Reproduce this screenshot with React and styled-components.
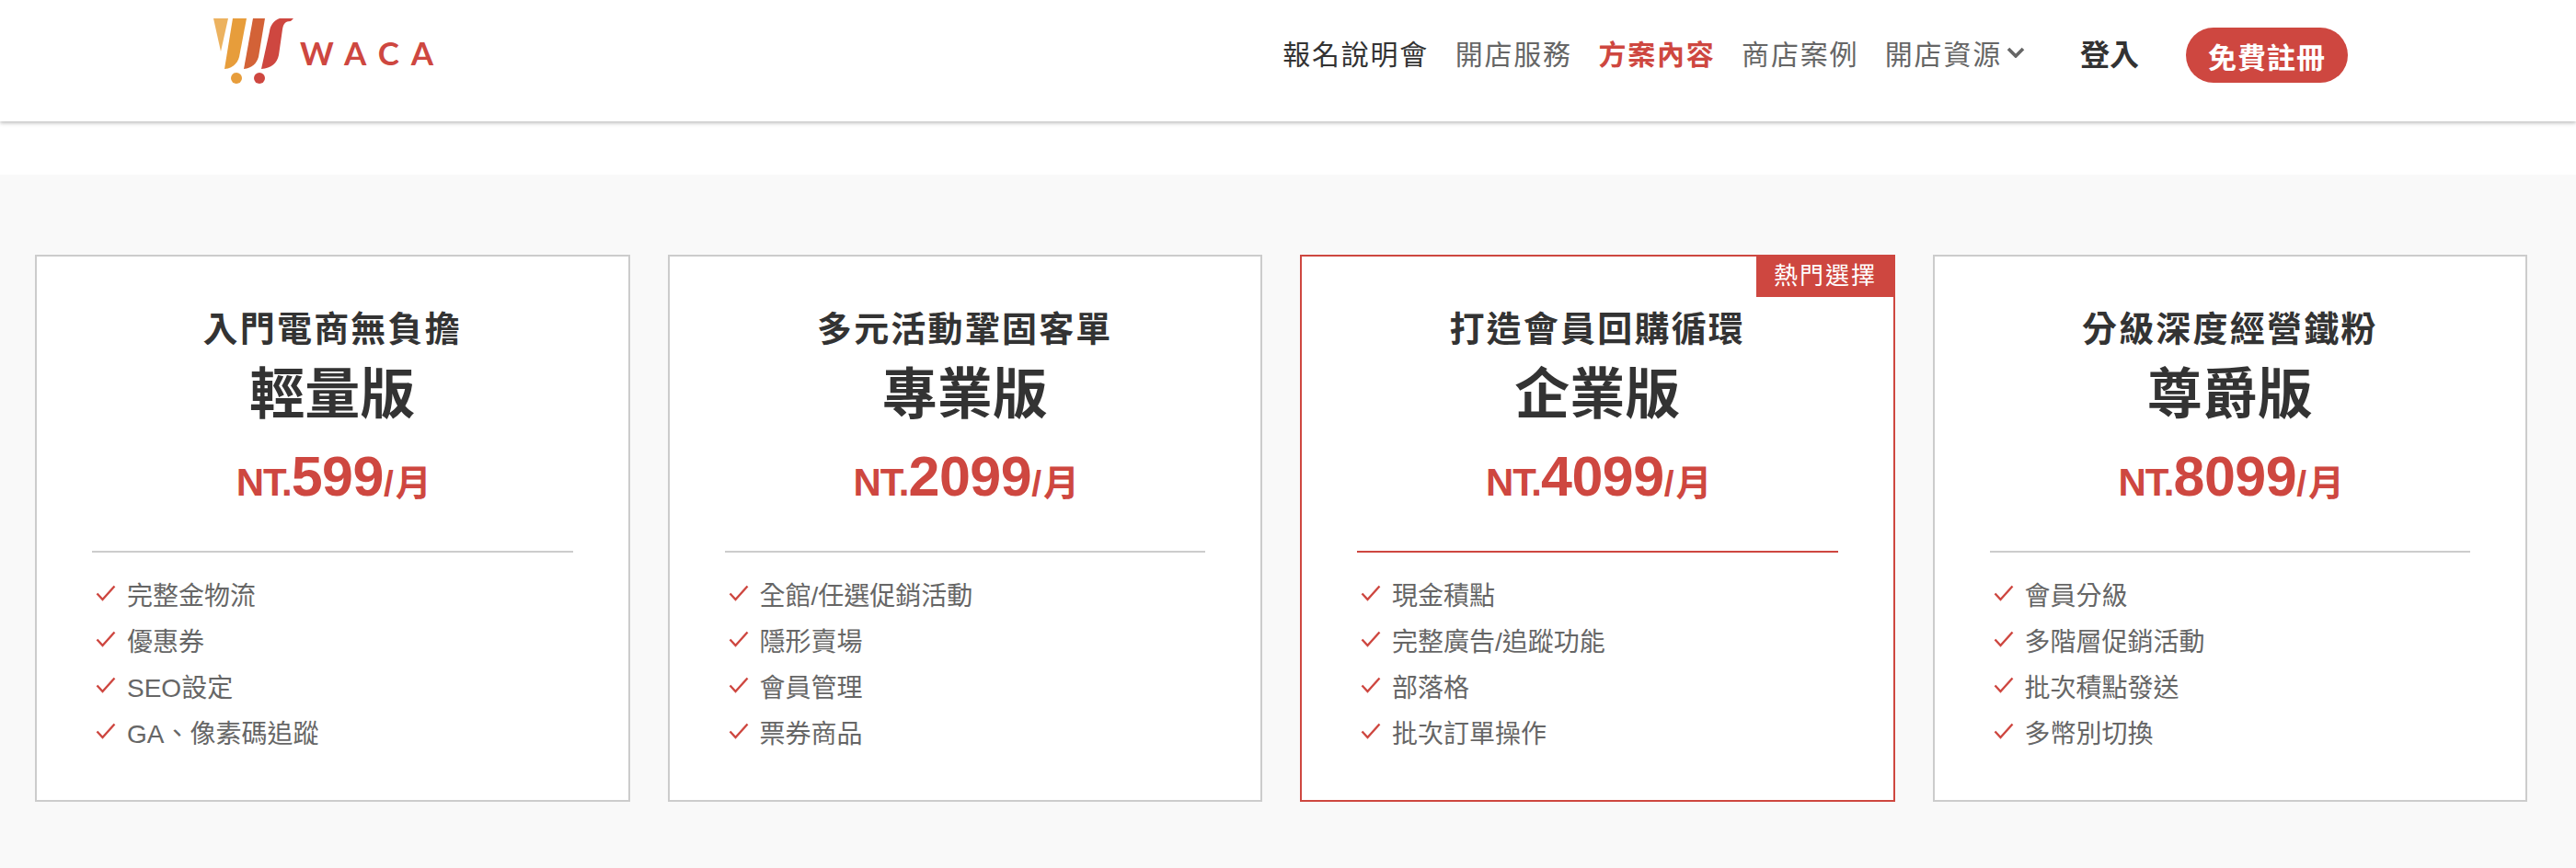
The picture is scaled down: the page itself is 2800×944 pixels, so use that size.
import React from 'react'
import styled, { createGlobalStyle } from 'styled-components'

const RED = '#ce4740'
const FONT = '"Liberation Sans", "Noto Sans CJK TC", sans-serif'

const GlobalStyle = createGlobalStyle`
  html, body {
    margin: 0;
    padding: 0;
    background: #fff;
    font-family: ${FONT};
    color: #333;
  }
  * { box-sizing: border-box; }
`

const Header = styled.header`
  height: 132px;
  background: #fff;
  box-shadow: 0 2px 4px rgba(0, 0, 0, 0.25);
  display: flex;
  align-items: center;
  padding: 0 248px 12px 232px;
`

const Logo = styled.a`
  display: flex;
  align-items: flex-start;
  height: 88px;
  margin-top: 8px;
`

const LogoMark = styled.svg`
  width: 90px;
  height: 76px;
  flex: none;
`

const LogoWord = styled.span`
  font-family: "Lato", sans-serif;
  font-weight: 700;
  font-size: 35px;
  line-height: 35px;
  letter-spacing: 13px;
  color: ${RED};
  margin: 20px 0 0 4px;
`

const Nav = styled.nav`
  margin-left: auto;
  display: flex;
  align-items: center;
`

const NavItem = styled.a`
  font-size: 30px;
  line-height: 44px;
  letter-spacing: 1.8px;
  margin-right: 28.5px;
  white-space: nowrap;
  display: flex;
  align-items: center;
  font-weight: ${p => (p.$active ? 700 : 400)};
  color: ${p => (p.$active ? RED : p.$dark ? '#333' : '#666')};
`

const Chevron = styled.svg`
  width: 20px;
  height: 12px;
  margin: -6px 0 0 5px;
`

const Login = styled.a`
  font-size: 32px;
  line-height: 44px;
  font-weight: 700;
  color: #333;
  margin: 0 51px 0 31.5px;
`

const SignUp = styled.a`
  width: 176px;
  height: 60px;
  border-radius: 30px;
  background: ${RED};
  color: #fff;
  font-size: 31px;
  font-weight: 700;
  letter-spacing: 1px;
  display: flex;
  align-items: center;
  justify-content: center;
`

const Section = styled.section`
  margin-top: 58px;
  height: 754px;
  background: #f9f9f9;
  padding: 87px 53px 0 38px;
`

const Cards = styled.div`
  display: grid;
  grid-template-columns: repeat(4, 1fr);
  gap: 41px;
`

const Card = styled.article`
  position: relative;
  height: 595px;
  background: #fff;
  border: 2px solid ${p => (p.$hot ? RED : '#ccc')};
  padding-top: 54px;
  text-align: center;
`

const Badge = styled.div`
  position: absolute;
  top: -2px;
  right: -2px;
  width: 151px;
  height: 46px;
  background: ${RED};
  color: #fff;
  font-size: 26px;
  line-height: 46px;
  letter-spacing: 2px;
  text-align: center;
`

const Tagline = styled.h3`
  margin: 0;
  font-size: 38px;
  line-height: 50px;
  font-weight: 700;
  letter-spacing: 2.2px;
  color: #333;
`

const PlanName = styled.h2`
  margin: 12px 0 0;
  font-size: 60px;
  line-height: 70px;
  font-weight: 700;
  color: #333;
`

const Price = styled.div`
  margin-top: 20px;
  padding-left: 5px;
  height: 66px;
  line-height: 66px;
  font-weight: 700;
  color: ${RED};
  font-size: 42px;
  letter-spacing: -1px;
`

const Amount = styled.span`
  font-size: 61px;
  letter-spacing: -0.5px;
`

const Per = styled.span`
  font-size: 39px;
  font-weight: 700;
  letter-spacing: 2px;
`

const Divider = styled.hr`
  margin: 48px 60px 0;
  border: 0;
  height: 2px;
  background: ${p => (p.$hot ? RED : '#ccc')};
`

const Features = styled.ul`
  list-style: none;
  margin: 20px 0 0;
  padding: 0 60px;
`

const Feature = styled.li`
  height: 50px;
  display: flex;
  align-items: center;
  font-size: 28px;
  color: #666;
  text-align: left;
`

const Tick = styled.svg`
  width: 22px;
  height: 18px;
  margin: -2px 12px 0 4px;
  flex: none;
`

const plans = [
  { tagline: '入門電商無負擔', name: '輕量版', price: '599', features: ['完整金物流', '優惠券', 'SEO設定', 'GA、像素碼追蹤'] },
  { tagline: '多元活動鞏固客單', name: '專業版', price: '2099', features: ['全館/任選促銷活動', '隱形賣場', '會員管理', '票券商品'] },
  { tagline: '打造會員回購循環', name: '企業版', price: '4099', hot: true, features: ['現金積點', '完整廣告/追蹤功能', '部落格', '批次訂單操作'] },
  { tagline: '分級深度經營鐵粉', name: '尊爵版', price: '8099', features: ['會員分級', '多階層促銷活動', '批次積點發送', '多幣別切換'] },
]

function Mark() {
  return (
    <LogoMark viewBox="0 0 90 76">
      <path d="M0 0 H16 L8 36 Z" fill="#ecb25f" />
      <path d="M21 0 H36 L28 42 C26 49 21 54 12 55 Z" fill="#e79d3b" />
      <path d="M43 0 H56 L49 42 C47 49 42 54 33 55 Z" fill="#d36237" />
      <path d="M61 14 C62 6 68 -1 78 -1 H88 L84 3 C78 3 76 6 75 12 L71 40 C69 49 63 54 52 55 Z" fill={RED} />
      <circle cx="25" cy="65" r="6" fill="#e79d3b" />
      <circle cx="50" cy="65" r="6" fill={RED} />
    </LogoMark>
  )
}

function PlanCard({ plan }) {
  return (
    <Card $hot={plan.hot}>
      {plan.hot && <Badge>熱門選擇</Badge>}
      <Tagline>{plan.tagline}</Tagline>
      <PlanName>{plan.name}</PlanName>
      <Price>NT.<Amount>{plan.price}</Amount><Per>/月</Per></Price>
      <Divider $hot={plan.hot} />
      <Features>
        {plan.features.map(f => (
          <Feature key={f}>
            <Tick viewBox="0 0 22 18">
              <polyline points="1.5,9.5 7.5,16 20.5,1.5" fill="none" stroke={RED} strokeWidth="2.4" />
            </Tick>
            {f}
          </Feature>
        ))}
      </Features>
    </Card>
  )
}

export default function App() {
  return (
    <>
      <GlobalStyle />
      <Header>
        <Logo>
          <Mark />
          <LogoWord>WACA</LogoWord>
        </Logo>
        <Nav>
          <NavItem $dark>報名說明會</NavItem>
          <NavItem>開店服務</NavItem>
          <NavItem $active>方案內容</NavItem>
          <NavItem>商店案例</NavItem>
          <NavItem>
            開店資源
            <Chevron viewBox="0 0 20 12">
              <polyline points="2,2 10,10 18,2" fill="none" stroke="#666" strokeWidth="3.6" />
            </Chevron>
          </NavItem>
          <Login>登入</Login>
          <SignUp>免費註冊</SignUp>
        </Nav>
      </Header>
      <Section>
        <Cards>
          {plans.map(p => <PlanCard key={p.name} plan={p} />)}
        </Cards>
      </Section>
    </>
  )
}
